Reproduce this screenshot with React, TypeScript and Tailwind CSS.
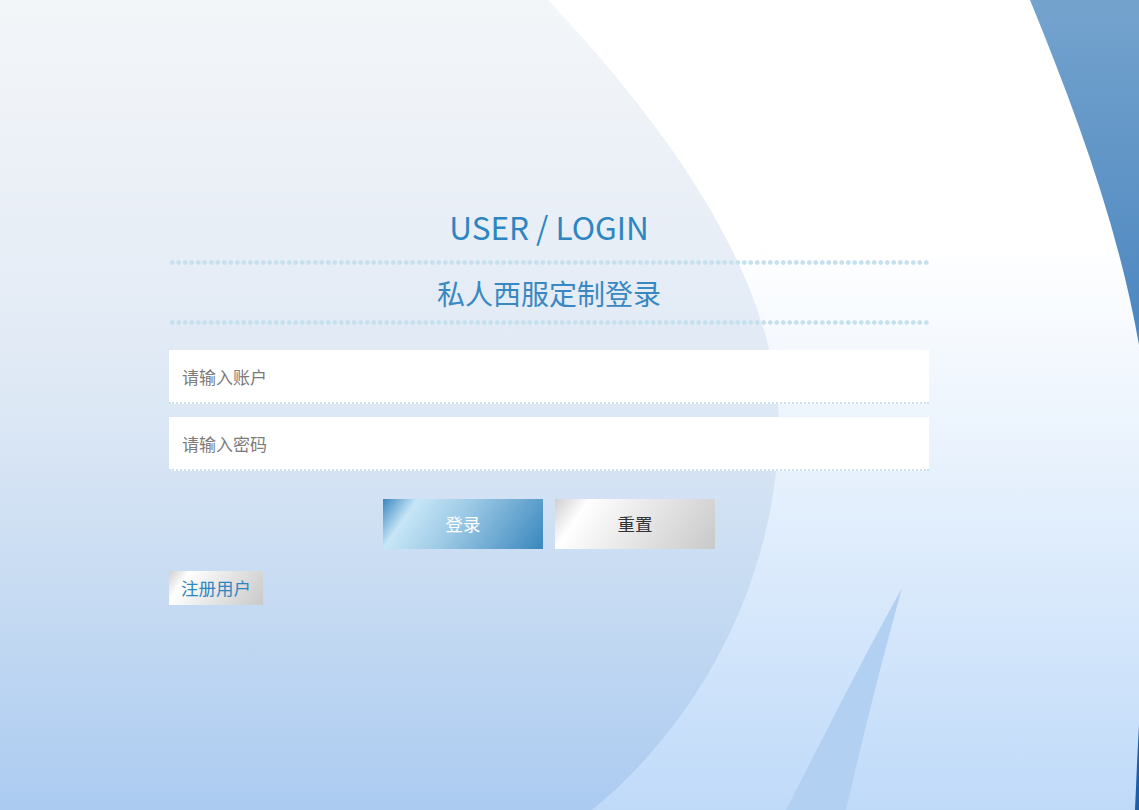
import { useState } from "react";

const Backdrop = () => (
  <svg
    className="absolute inset-0 w-full h-full"
    viewBox="0 0 1139 810"
    preserveAspectRatio="none"
  >
    <defs>
      <linearGradient id="outer" x1="0" y1="0" x2="0" y2="1">
        <stop offset="0" stopColor="#ffffff" />
        <stop offset="0.3" stopColor="#ffffff" />
        <stop offset="0.55" stopColor="#eaf3fd" />
        <stop offset="1" stopColor="#bfdaf9" />
      </linearGradient>
      <linearGradient id="inner" x1="0" y1="0" x2="0" y2="1">
        <stop offset="0" stopColor="#f3f6f9" />
        <stop offset="0.3" stopColor="#e8eef6" />
        <stop offset="0.5" stopColor="#dde8f5" />
        <stop offset="0.75" stopColor="#c5daf2" />
        <stop offset="1" stopColor="#abcbf1" />
      </linearGradient>
      <linearGradient id="crescent" x1="0" y1="0" x2="0" y2="1">
        <stop offset="0" stopColor="#74a3cd" />
        <stop offset="1" stopColor="#4b86c0" />
      </linearGradient>
    </defs>
    <rect x="0" y="0" width="1139" height="810" fill="url(#outer)" />
    <path
      d="M -10 0 L 548 0 C 680 140, 790 300, 778 450 C 768 600, 690 730, 592 810 L -10 810 Z"
      fill="url(#inner)"
    />
    <path d="M 1030 0 C 1075 110, 1118 225, 1139 345 L 1139 0 Z" fill="url(#crescent)" />
    <path d="M 1139 725 C 1137 760, 1136 790, 1135 810 L 1139 810 Z" fill="#1f5fa8" />
    <path
      d="M 902 588 C 882 660, 862 740, 846 810 L 786 810 C 822 740, 862 660, 902 588 Z"
      fill="#b2d0f2"
    />
  </svg>
);

const Dots = () => (
  <div className="h-[5px] w-full bg-[radial-gradient(circle,#c5e0ee_2px,transparent_2.5px)] bg-[length:6.5px_5px] bg-repeat-x" />
);

const silver =
  "bg-[linear-gradient(125deg,#cfcfcf_0%,#ffffff_18%,#ececec_45%,#c9c9c9_100%)]";

export default function App() {
  const [account, setAccount] = useState("");
  const [password, setPassword] = useState("");

  return (
    <div
      className="relative w-[1139px] h-[810px] overflow-hidden"
      style={{ fontFamily: '"Noto Sans CJK SC", "Noto Sans", sans-serif' }}
    >
      <Backdrop />

      <div className="relative pl-[169px] pt-[204px]">
        <div className="w-[760px]">
          {/* Title */}
          <h1 className="text-center text-[31.5px] leading-[44px] text-[#2e86c1]">
            USER / LOGIN
          </h1>
          <div className="mt-[12px]">
            <Dots />
          </div>
          <h2 className="mt-[8px] text-center text-[28px] leading-[40px] text-[#3a88c2]">
            私人西服定制登录
          </h2>
          <div className="mt-[7px]">
            <Dots />
          </div>

          {/* Form */}
          <div className="mt-[25px] flex flex-col gap-[13px]">
            <input
              value={account}
              onChange={(e) => setAccount(e.target.value)}
              placeholder="请输入账户"
              className="h-[54px] w-full bg-white px-[13px] text-[17px] text-[#555] outline-none border-b-2 border-dotted border-[#c9e0ef] placeholder:text-[#7b7b7b]"
            />
            <input
              type="password"
              value={password}
              onChange={(e) => setPassword(e.target.value)}
              placeholder="请输入密码"
              className="h-[54px] w-full bg-white px-[13px] text-[17px] text-[#555] outline-none border-b-2 border-dotted border-[#c9e0ef] placeholder:text-[#7b7b7b]"
            />
          </div>

          <div className="mt-[28px] flex justify-center gap-[12px]">
            <button className="h-[50px] w-[160px] text-[17.5px] text-white bg-[linear-gradient(125deg,#3a86bf_0%,#c6e6f7_18%,#9fcbe6_45%,#3a87be_100%)]">
              登录
            </button>
            <button className={`h-[50px] w-[160px] text-[17.5px] text-[#333] ${silver}`}>
              重置
            </button>
          </div>

          <div className="mt-[22px]">
            <button className={`h-[34px] px-[12px] text-[17.5px] text-[#2e86c1] ${silver}`}>
              注册用户
            </button>
          </div>
        </div>
      </div>
    </div>
  );
}
